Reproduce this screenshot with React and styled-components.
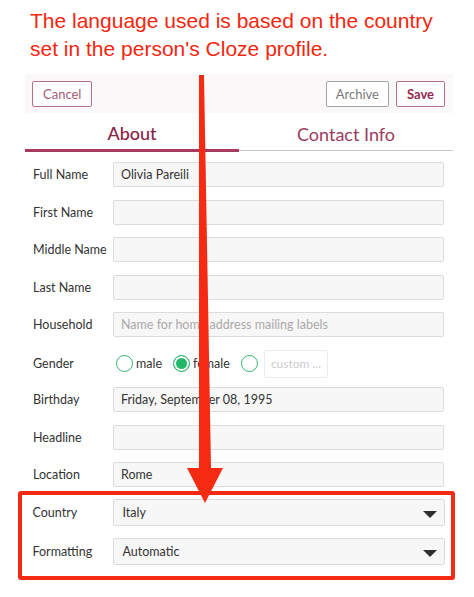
import React from "react";
import styled, { createGlobalStyle } from "styled-components";

const GlobalStyle = createGlobalStyle`
  html, body {
    margin: 0;
    padding: 0;
    background: #ffffff;
  }
  body {
    font-family: "Lato", "Open Sans", sans-serif;
  }
`;

const Page = styled.div`
  position: relative;
  width: 474px;
  height: 597px;
  overflow: hidden;
`;

const Note = styled.div`
  font-family: "Liberation Sans", Arial, sans-serif;
  font-size: 21px;
  line-height: 28px;
  color: #f5260f;
  padding: 7px 0 0 30px;
  max-width: 420px;
  margin-bottom: 11px;
`;

const Panel = styled.div`
  margin-left: 25px;
  width: 428px;
`;

const Toolbar = styled.div`
  display: flex;
  align-items: center;
  height: 39px;
  padding: 0 8px 0 7px;
  background: #fbf8f9;
  gap: 7px;
`;

const Spacer = styled.div`
  flex: 1;
`;

const Button = styled.button`
  height: 26px;
  padding: 0 ${(p) => (p.$pad ? p.$pad : 10)}px;
  border-radius: 2px;
  background: #ffffff;
  font-family: "Lato", sans-serif;
  font-size: 13px;
  border: 1px solid ${(p) => (p.$muted ? "#a4a4a4" : "#b8708a")};
  color: ${(p) => (p.$muted ? "#7a7a7a" : p.$strong ? "#962a4f" : "#a45a76")};
  font-weight: ${(p) => (p.$strong ? 700 : 400)};
`;

const Tabs = styled.div`
  display: flex;
  height: 39px;
`;

const Tab = styled.div`
  flex: 1;
  display: flex;
  align-items: center;
  justify-content: center;
  font-size: 18px;
  padding-top: 4px;
  color: ${(p) => (p.$active ? "#8a2348" : "#9a3c60")};
  font-weight: ${(p) => (p.$active ? 500 : 400)};
  border-bottom: ${(p) => (p.$active ? "3px solid #a8395f" : "1px solid #c9c9c9")};
  margin-bottom: ${(p) => (p.$active ? 0 : 1)}px;
  box-sizing: border-box;
`;

const Form = styled.div`
  padding: 10px 9px 0 8px;
`;

const Fields = styled.div`
  display: flex;
  flex-direction: column;
  gap: 12.5px;
`;

const Row = styled.div`
  display: grid;
  grid-template-columns: 80px 1fr;
  align-items: center;
  height: ${(p) => (p.$tall ? 27 : 25)}px;
`;

const Label = styled.div`
  font-size: 12.5px;
  color: #333333;
`;

const Input = styled.div`
  height: 100%;
  box-sizing: border-box;
  display: flex;
  align-items: center;
  padding: 0 ${(p) => (p.$select ? 7 : 6)}px 0 ${(p) => (p.$select ? 9 : 7)}px;
  background: #f8f7f7;
  border: 1px solid #dcdcdc;
  border-radius: 2px;
  font-size: 12.5px;
  color: ${(p) => (p.$placeholder ? "#a9a9a9" : "#333333")};
  justify-content: space-between;
`;

const Choices = styled.div`
  display: flex;
  align-items: center;
  padding-left: 3px;
`;

const Radio = styled.span`
  width: 17px;
  height: 17px;
  box-sizing: border-box;
  border-radius: 50%;
  border: 1.5px solid #32b574;
  background: ${(p) => (p.$checked ? "#22b86a" : "#ffffff")};
  box-shadow: ${(p) => (p.$checked ? "inset 0 0 0 2px #ffffff" : "none")};
  margin-right: 3px;
  flex-shrink: 0;
`;

const ChoiceText = styled.span`
  font-size: 12.5px;
  color: #333333;
  margin-right: 11px;
`;

const Custom = styled.div`
  margin-left: 3px;
  width: 64px;
  height: 28px;
  box-sizing: border-box;
  border: 1px solid #ececec;
  border-radius: 2px;
  display: flex;
  align-items: center;
  padding-left: 6px;
  font-size: 12px;
  color: #cccccc;
`;

const Highlight = styled.div`
  margin: 3.5px -11px 0 -15px;
  border: 4.5px solid #f52a13;
  border-radius: 3px;
  padding: 4.5px 6.5px 11px 10.5px;
  display: flex;
  flex-direction: column;
  gap: 12px;
`;

const Caret = () => (
  <svg width="14" height="7" viewBox="0 0 14 7" style={{ marginTop: 3 }}>
    <path d="M0 0 L14 0 L7 7 Z" fill="#2e2e2e" />
  </svg>
);

const Arrow = styled.svg`
  position: absolute;
  top: 0;
  left: 0;
  pointer-events: none;
`;

const fields = [
  { label: "Full Name", value: "Olivia Pareili" },
  { label: "First Name" },
  { label: "Middle Name" },
  { label: "Last Name" },
  { label: "Household", placeholder: "Name for home address mailing labels" },
  { label: "Gender", gender: true },
  { label: "Birthday", value: "Friday, September 08, 1995" },
  { label: "Headline" },
  { label: "Location", value: "Rome" }
];

const App = () => {
  return (
    <Page>
      <GlobalStyle />
      <Note>
        The language used is based on the country set in the person's Cloze
        profile.
      </Note>
      <Panel>
        <Toolbar>
          <Button>Cancel</Button>
          <Spacer />
          <Button $muted $pad={9}>Archive</Button>
          <Button $strong $pad={10}>Save</Button>
        </Toolbar>
        <Tabs>
          <Tab $active>About</Tab>
          <Tab>Contact Info</Tab>
        </Tabs>
        <Form>
          <Fields>
            {fields.map((f) => (
              <Row key={f.label}>
                <Label>{f.label}</Label>
                {f.gender ? (
                  <Choices>
                    <Radio />
                    <ChoiceText>male</ChoiceText>
                    <Radio $checked />
                    <ChoiceText>female</ChoiceText>
                    <Radio />
                    <Custom>custom ...</Custom>
                  </Choices>
                ) : (
                  <Input $placeholder={!!f.placeholder}>
                    {f.value || f.placeholder || ""}
                  </Input>
                )}
              </Row>
            ))}
          </Fields>
          <Highlight>
            <Row $tall>
              <Label>Country</Label>
              <Input $select>
                Italy
                <Caret />
              </Input>
            </Row>
            <Row $tall>
              <Label>Formatting</Label>
              <Input $select>
                Automatic
                <Caret />
              </Input>
            </Row>
          </Highlight>
        </Form>
      </Panel>
      <Arrow width="474" height="597" viewBox="0 0 474 597">
        <polygon
          points="199,75 204,75 211,468 223,468 205,503 187,468 199,468"
          fill="#f52a13"
        />
      </Arrow>
    </Page>
  );
};

export default App;
